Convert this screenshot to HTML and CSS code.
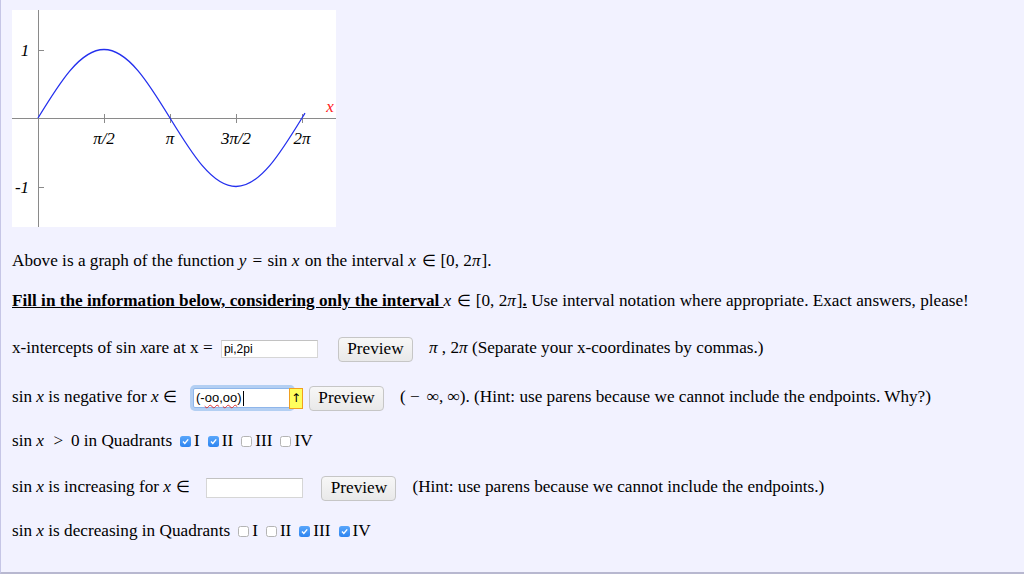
FILE: index.html
```html
<!DOCTYPE html>
<html>
<head>
<meta charset="utf-8">
<title>Sine graph questions</title>
<link rel="stylesheet" href="styles.css">
</head>
<body>
<div class="page">
  <div class="graph">
    <svg width="324" height="217" viewBox="0 0 324 217" xmlns="http://www.w3.org/2000/svg">
      <g stroke="#8a8a8a" stroke-width="1" fill="none">
        <line x1="26.5" y1="0" x2="26.5" y2="217"/>
        <line x1="0" y1="108.5" x2="324" y2="108.5"/>
        <line x1="26" y1="40.5" x2="32" y2="40.5"/>
        <line x1="26" y1="177.5" x2="32" y2="177.5"/>
        <line x1="92.5" y1="104" x2="92.5" y2="113"/>
        <line x1="158.5" y1="104" x2="158.5" y2="113"/>
        <line x1="224.5" y1="104" x2="224.5" y2="113"/>
        <line x1="290.5" y1="104" x2="290.5" y2="113"/>
      </g>
      <path d="M26,108 C47.5,72.9 68.1,39.5 92,39.5 C115.9,39.5 136.5,72.9 158,108 C179.5,143.1 200.1,176.5 224,176.5 C247.9,176.5 268.5,143.1 290,108 L293,103.1" stroke="#2430ee" stroke-width="1.3" fill="none"/>
      <g font-family="Liberation Serif, serif" font-style="italic" font-size="17" fill="#000">
        <text x="13" y="46" text-anchor="middle">1</text>
        <text x="10" y="183" text-anchor="middle">-1</text>
        <text x="92" y="134" text-anchor="middle">π/2</text>
        <text x="158" y="134" text-anchor="middle">π</text>
        <text x="224" y="134" text-anchor="middle">3π/2</text>
        <text x="290" y="134" text-anchor="middle">2π</text>
        <text x="318" y="102" text-anchor="middle" fill="#ff2020">x</text>
      </g>
    </svg>
  </div>

  <div class="row r1">Above is a graph of the function <span class="m"><i>y</i><span class="op">=</span>sin <i>x</i></span> on the interval <span class="m"><i>x</i><span class="op el">∈</span>[0, 2<i>π</i>]</span>.</div>

  <div class="row r2"><b class="ul">Fill in the information below, considering only the interval </b><span class="m"><i>x</i><span class="op el">∈</span>[0, 2<i>π</i>]</span><b class="ul">.</b> Use interval notation where appropriate. Exact answers, please!</div>

  <div class="row r3">x-intercepts of sin <i>x</i>are at x = <input class="inp in1" type="text" value="pi,2pi"><button class="btn b1">Preview</button><span class="ans"><i>π</i> , 2<i>π</i> (Separate your x-coordinates by commas.)</span></div>

  <div class="row r4">sin <i>x</i> is negative for <i>x</i><span class="op el">∈</span><span class="inp in2 focus">(-<span class="sq">oo</span>,<span class="sq">oo</span>)<span class="caret"></span></span><span class="flag">↑</span><button class="btn b2">Preview</button><span class="ans"><span class="m">(<span class="op minus">−</span>∞, ∞)</span>. (Hint: use parens because we cannot include the endpoints. Why?)</span></div>

  <div class="row r5">sin <i>x</i><span class="op gt">&gt;</span>0 in Quadrants<span class="opt"><span class="cb on"><svg width="11" height="11" viewBox="0 0 11 11"><path d="M3 5.6 L4.8 7.4 L8.2 3.4" stroke="#fff" stroke-width="1.4" fill="none"/></svg></span>I</span><span class="opt"><span class="cb on"><svg width="11" height="11" viewBox="0 0 11 11"><path d="M3 5.6 L4.8 7.4 L8.2 3.4" stroke="#fff" stroke-width="1.4" fill="none"/></svg></span>II</span><span class="opt"><span class="cb"></span>III</span><span class="opt"><span class="cb"></span>IV</span></div>

  <div class="row r6">sin <i>x</i> is increasing for <i>x</i><span class="op el">∈</span><input class="inp in3" type="text" value=""><button class="btn b3">Preview</button><span class="ans">(Hint: use parens because we cannot include the endpoints.)</span></div>

  <div class="row r7">sin <i>x</i> is decreasing in Quadrants<span class="opt"><span class="cb"></span>I</span><span class="opt"><span class="cb"></span>II</span><span class="opt"><span class="cb on"><svg width="11" height="11" viewBox="0 0 11 11"><path d="M3 5.6 L4.8 7.4 L8.2 3.4" stroke="#fff" stroke-width="1.4" fill="none"/></svg></span>III</span><span class="opt"><span class="cb on"><svg width="11" height="11" viewBox="0 0 11 11"><path d="M3 5.6 L4.8 7.4 L8.2 3.4" stroke="#fff" stroke-width="1.4" fill="none"/></svg></span>IV</span></div>
</div>
</body>
</html>
```

FILE: styles.css
```css
html, body {
  margin: 0;
  padding: 0;
}
body {
  background: #f2f2ff;
  font-family: "Liberation Serif", "Times New Roman", serif;
  font-size: 17.2px;
  color: #000;
}
.page {
  height: 574px;
  box-sizing: border-box;
  border-left: 1px solid #c6c6e6;
  border-bottom: 2px solid #b8b8d0;
  padding: 10px 0 0 11px;
}
.graph {
  width: 324px;
  height: 217px;
  background: #fff;
}
.graph svg {
  display: block;
}
.row {
  height: 24px;
  line-height: 24px;
  white-space: nowrap;
}
.r1 { margin-top: 22px; }
.r2 { margin-top: 16px; }
.r3 { margin-top: 23px; }
.r4 { margin-top: 25px; }
.r5 { margin-top: 20px; }
.r6 { margin-top: 22px; }
.r7 { margin-top: 20px; }

.m i {
  margin-right: 1px;
}
.op {
  margin: 0 0.3em;
}
.el {
  font-size: 0.92em;
}
.gt {
  margin: 0 0.45em 0 0.55em;
}
.minus {
  margin: 0 0.4em 0 0.25em;
}
.ul {
  text-decoration: underline;
}
.inp {
  display: inline-block;
  box-sizing: border-box;
  vertical-align: middle;
  background: #fff;
  border: 1px solid #d6d6d6;
  border-top-color: #c2c2c2;
  font-family: "Liberation Sans", Arial, sans-serif;
  font-size: 12px;
  color: #000;
  padding: 0 2px;
  margin: 0;
  outline: none;
}
.in1 {
  width: 97px;
  height: 18px;
  margin-left: 4px;
}
.in2 {
  width: 99px;
  height: 20px;
  line-height: 18px;
  font-size: 13px;
  margin-left: 11px;
  border-radius: 2px;
  border-color: #8fb6ea;
  box-shadow: 0 0 0 3px #b3cff3;
}
.in3 {
  width: 97px;
  height: 20px;
  margin-left: 12px;
}
.sq {
  text-decoration: underline wavy #e03030;
  text-decoration-thickness: 1px;
  text-underline-offset: 2px;
}
.caret {
  display: inline-block;
  width: 1px;
  height: 15px;
  background: #000;
  vertical-align: middle;
  margin-left: 1px;
}
.flag {
  display: inline-block;
  box-sizing: border-box;
  width: 14px;
  height: 21px;
  line-height: 19px;
  vertical-align: middle;
  text-align: center;
  background: #ffff5c;
  border: 1px solid #f0a020;
  font-family: "DejaVu Sans", sans-serif;
  font-size: 12px;
  margin-left: -3px;
  position: relative;
}
.btn {
  display: inline-block;
  box-sizing: border-box;
  vertical-align: middle;
  width: 75px;
  height: 25px;
  padding: 0;
  font-family: "Liberation Serif", "Times New Roman", serif;
  font-size: 17.2px;
  color: #000;
  border: 1px solid #c6c6c6;
  border-radius: 4px;
  background: linear-gradient(#f7f7f7, #e9e9e9);
}
.b1 { margin-left: 20px; }
.b2 { margin-left: 6px; }
.b3 { margin-left: 18px; }
.ans {
  margin-left: 16px;
}
.opt {
  margin-right: 0;
}
.cb {
  display: inline-block;
  box-sizing: border-box;
  width: 11px;
  height: 11px;
  vertical-align: -1px;
  border-radius: 2.5px;
  background: #fff;
  border: 1px solid #b4b4b4;
  margin-right: 3px;
  margin-left: 8px;
}
.cb svg {
  display: block;
  margin: -1px;
}
.cb.on {
  border: none;
  background: linear-gradient(#5aa7fb, #2d84f0);
}
.cb.on svg {
  margin: 0;
}
```
